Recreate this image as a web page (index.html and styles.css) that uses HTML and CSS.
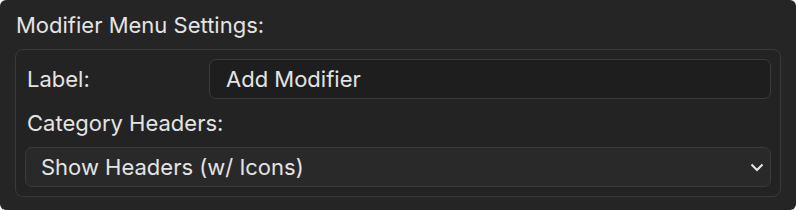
FILE: index.html
```html
<!DOCTYPE html>
<html>
<head>
<meta charset="utf-8">
<link rel="stylesheet" href="styles.css">
</head>
<body>
<div class="panel">
  <div class="title">Modifier Menu Settings:</div>
  <div class="group">
    <div class="row">
      <div class="label">Label:</div>
      <div class="input">Add Modifier</div>
    </div>
    <div class="label cat">Category Headers:</div>
    <div class="select">
      <span>Show Headers (w/ Icons)</span>
      <svg class="chev" width="14" height="9" viewBox="0 0 14 9"><path d="M1.5 1.5 L7 7 L12.5 1.5" fill="none" stroke="#e6e6e6" stroke-width="2"/></svg>
    </div>
  </div>
</div>
</body>
</html>
```
FILE: styles.css
```css
html, body { margin: 0; padding: 0; background: #ffffff; }
body { font-family: Inter, "Noto Sans", sans-serif; }
.panel {
  width: 796px; height: 210px; box-sizing: border-box;
  background: #252525; border-radius: 6px;
  padding: 12px 15px 0 15px;
  color: #e4e4e4;
}
.title { font-size: 22px; line-height: 26px; height: 26px; margin-left: 1px; }
.group {
  margin-top: 11px;
  border: 1px solid #3a3a3a; border-radius: 8px;
  background: #232323;
  padding: 9px 9px 9px 9px;
  display: flex; flex-direction: column;
}
.row { display: flex; align-items: center; }
.label { font-size: 22px; line-height: 24px; margin-left: 2px; }
.row .label { width: 182px; }
.input {
  flex: 1; height: 38px; box-sizing: content-box;
  border: 1px solid #3b3b3b; border-radius: 7px;
  background: #1e1e1e;
  font-size: 22px; line-height: 38px; padding-left: 16px;
}
.cat { margin-top: 12px; margin-bottom: 12px; }
.select {
  height: 38px; border: 1px solid #3b3b3b; border-radius: 7px;
  background: #292929;
  display: flex; align-items: center; justify-content: space-between;
  font-size: 22px; padding: 0 6px 0 15px;
}
.chev { display: block; }
```
